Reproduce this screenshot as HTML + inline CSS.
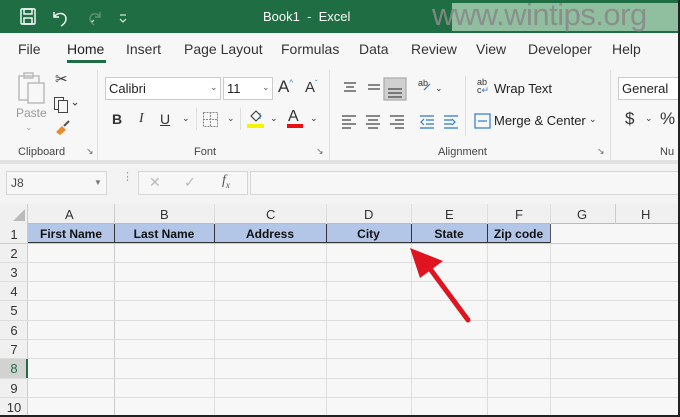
<!DOCTYPE html>
<html><head><style>
*{margin:0;padding:0;box-sizing:border-box}
body{width:680px;height:417px;overflow:hidden;background:#f3f3f3;font-family:"Liberation Sans",sans-serif;position:relative;color:#333}
.a{position:absolute}
.t{font-size:12px;color:#222}
.grid div{position:absolute}
</style></head><body>
<div class="a" style="left:0;top:0;width:680px;height:33px;background:#1f6e43"></div>
<div class="a" style="left:452px;top:3px;width:228px;height:28px;background:#8fbf9f"></div>
<svg class="a" style="left:18px;top:6px" width="120" height="22" viewBox="0 0 120 22" fill="none" stroke="#fff" stroke-width="1.4">
<rect x="3" y="3" width="14" height="15" rx="1"/><rect x="6" y="3" width="8" height="5"/><rect x="6" y="12" width="8" height="6"/>
<path d="M36 6v5h5M36 11c3-5 12-5 12 2c0 3-3 6-5 7"/><path d="M72 14l2 2 2-2" stroke-width="1"/>
<path d="M102 9h6M102 13l3 3 3-3" stroke-width="1"/>
</svg>
<svg class="a" style="left:88px;top:8px" width="30" height="18" fill="none" stroke="#5d9475" stroke-width="1.4"><path d="M12 4v5h-5M12 9c-3-5-10-4-10 2c0 3 3 5 4 6"/></svg>
<div class="a" style="left:263px;top:9px;font-size:13px;color:#fff">Book1 &nbsp;- &nbsp;Excel</div>
<div class="a" style="left:432px;top:-3px;font-size:31px;color:#8a8a8a;opacity:.9;white-space:nowrap;letter-spacing:-0.5px">www.wintips.org</div>
<div class="a" style="left:0;top:33px;width:680px;height:130px;background:#f7f7f7"></div>
<div class="a" style="top:41px;left:0;font-size:14px;color:#333;white-space:nowrap">
<span class="a" style="left:18px">File</span><span class="a" style="left:67px;color:#222">Home</span><span class="a" style="left:126px">Insert</span><span class="a" style="left:184px">Page Layout</span><span class="a" style="left:281px">Formulas</span><span class="a" style="left:359px">Data</span><span class="a" style="left:411px">Review</span><span class="a" style="left:476px">View</span><span class="a" style="left:528px">Developer</span><span class="a" style="left:612px">Help</span></div>
<div class="a" style="left:67px;top:60px;width:39px;height:3px;background:#1f6e43"></div>
<svg class="a" style="left:16px;top:70px" width="60" height="72" fill="none" stroke="#bbb" stroke-width="1.5">
<rect x="3" y="6" width="20" height="24"/><rect x="12" y="13" width="16" height="20" fill="#f7f7f7"/><rect x="8" y="3" width="9" height="5"/>
</svg>
<div class="a t" style="left:16px;top:106px;color:#999">Paste</div>
<div class="a" style="left:25px;top:122px;font-size:9px;color:#aaa">⌄</div>
<div class="a" style="left:55px;top:70px;font-size:15px;color:#333">✂</div>
<svg class="a" style="left:53px;top:95px" width="30" height="20" fill="none" stroke="#444"><rect x="1.5" y="2.5" width="9" height="12"/><rect x="5.5" y="5.5" width="9" height="12" fill="#f7f7f7"/><path d="M20 8l2 2 2-2"/></svg>
<svg class="a" style="left:53px;top:118px" width="20" height="18"><path d="M3 14l6-6 4 4-6 5z" fill="#e98a2c"/><path d="M11 8l5-5" stroke="#555" stroke-width="2"/></svg>
<div class="a t" style="left:18px;top:146px;font-size:11px;color:#444">Clipboard</div>
<div class="a" style="left:86px;top:146px;font-size:9px;color:#666">↘</div>
<div class="a" style="left:97px;top:70px;width:1px;height:90px;background:#ddd"></div>
<div class="a" style="left:105px;top:77px;width:116px;height:23px;border:1px solid #ccc;background:#fff"></div>
<div class="a t" style="left:109px;top:81px;font-size:13px">Calibri</div>
<div class="a" style="left:210px;top:82px;font-size:9px;color:#555">⌄</div>
<div class="a" style="left:223px;top:77px;width:50px;height:23px;border:1px solid #ccc;background:#fff"></div>
<div class="a t" style="left:227px;top:81px;font-size:13px">11</div>
<div class="a" style="left:262px;top:82px;font-size:9px;color:#555">⌄</div>
<div class="a" style="left:278px;top:77px;font-size:17px;color:#333">A<sup style="font-size:8px;color:#2a7ad0">^</sup></div>
<div class="a" style="left:305px;top:79px;font-size:15px;color:#333">A<sup style="font-size:8px;color:#2a7ad0">ˇ</sup></div>
<div class="a" style="left:112px;top:111px;font-size:14px;font-weight:bold">B</div>
<div class="a" style="left:139px;top:111px;font-size:14px;font-style:italic;font-family:'Liberation Serif'">I</div>
<div class="a" style="left:160px;top:111px;font-size:14px;text-decoration:underline">U</div>
<div class="a" style="left:182px;top:113px;font-size:9px">⌄</div>
<div class="a" style="left:196px;top:108px;width:1px;height:22px;background:#ddd"></div>
<svg class="a" style="left:202px;top:111px" width="18" height="18" fill="none" stroke="#888" stroke-dasharray="2 1"><rect x="1.5" y="1.5" width="14" height="14"/><path d="M8.5 1v15M1 8.5h15"/></svg>
<div class="a" style="left:227px;top:113px;font-size:9px">⌄</div>
<div class="a" style="left:240px;top:108px;width:1px;height:22px;background:#ddd"></div>
<svg class="a" style="left:247px;top:108px" width="18" height="16" fill="none" stroke="#333"><path d="M4 8l5-5 5 5-5 5z"/><path d="M13 5v6" stroke="#2a7ad0"/></svg>
<div class="a" style="left:247px;top:124px;width:17px;height:4px;background:#f5f500"></div>
<div class="a" style="left:270px;top:113px;font-size:9px">⌄</div>
<div class="a" style="left:288px;top:108px;font-size:16px;color:#333">A</div>
<div class="a" style="left:287px;top:124px;width:16px;height:4px;background:#e81010"></div>
<div class="a" style="left:310px;top:113px;font-size:9px">⌄</div>
<div class="a t" style="left:194px;top:146px;font-size:11px;color:#444">Font</div>
<div class="a" style="left:316px;top:146px;font-size:9px;color:#666">↘</div>
<div class="a" style="left:329px;top:70px;width:1px;height:90px;background:#ddd"></div>
<svg class="a" style="left:338px;top:76px" width="270" height="60" fill="none" stroke="#444" stroke-width="1.2">
<rect x="46" y="2" width="22" height="22" fill="#d0d0d0" stroke="#aaa"/>
<path d="M6 7h12M8 11h8M6 15h12"/><path d="M30 9h12M30 13h12"/><path d="M50 13h14M50 17h14M50 21h14"/>
<path d="M4 40h14M4 44h9M4 48h14M4 52h9"/><path d="M28 40h14M30 44h10M28 48h14M30 52h10"/><path d="M52 40h14M57 44h9M52 48h14M57 52h9"/>
<path d="M82 40h14M82 52h14M88 44h8M88 48h8M86 43l-3 3 3 3" stroke="#2a7ad0"/>
<path d="M106 40h14M106 52h14M106 44h8M106 48h8M114 43l3 3-3 3" stroke="#2a7ad0"/>
<rect x="137" y="38" width="15" height="14" stroke="#2a7ad0"/><path d="M140 45h9" stroke="#2a7ad0"/>
<path d="M86 14l6-6" stroke="#2a7ad0"/>
</svg>
<div class="a" style="left:418px;top:78px;font-size:9px;color:#333">ab</div>
<div class="a" style="left:435px;top:83px;font-size:9px">⌄</div>
<div class="a" style="left:465px;top:76px;width:1px;height:60px;background:#ddd"></div>
<div class="a" style="left:477px;top:78px;font-size:9px;color:#333;line-height:8px">ab<br>c<span style="color:#2a7ad0">↵</span></div>
<div class="a t" style="left:494px;top:81px;font-size:13px">Wrap Text</div>
<div class="a t" style="left:494px;top:113px;font-size:13px">Merge &amp; Center</div>
<div class="a" style="left:589px;top:114px;font-size:9px">⌄</div>
<div class="a t" style="left:438px;top:146px;font-size:11px;color:#444">Alignment</div>
<div class="a" style="left:597px;top:146px;font-size:9px;color:#666">↘</div>
<div class="a" style="left:610px;top:70px;width:1px;height:90px;background:#ddd"></div>
<div class="a" style="left:618px;top:77px;width:70px;height:23px;border:1px solid #ccc;background:#fff"></div>
<div class="a t" style="left:622px;top:81px;font-size:13px">General</div>
<div class="a" style="left:625px;top:109px;font-size:17px;color:#333">$</div>
<div class="a" style="left:645px;top:113px;font-size:9px">⌄</div>
<div class="a" style="left:660px;top:109px;font-size:17px;color:#333">%</div>
<div class="a t" style="left:660px;top:146px;font-size:11px;color:#444">Nu</div>
<div class="a" style="left:0;top:160px;width:680px;height:4px;background:#e2e2e2"></div>
<div class="a" style="left:0;top:164px;width:680px;height:40px;background:#f3f3f3"></div>
<div class="a" style="left:6px;top:171px;width:101px;height:24px;border:1px solid #d5d5d5;background:#f7f7f7"></div>
<div class="a t" style="left:11px;top:176px;color:#444">J8</div>
<div class="a" style="left:94px;top:178px;font-size:8px;color:#777">▼</div>
<div class="a" style="left:122px;top:175px;font-size:11px;color:#999;line-height:5px">⋮</div>
<div class="a" style="left:138px;top:171px;width:110px;height:24px;border:1px solid #d5d5d5;background:#f7f7f7"></div>
<div class="a" style="left:149px;top:174px;font-size:14px;color:#bbb">✕</div>
<div class="a" style="left:184px;top:174px;font-size:14px;color:#bbb">✓</div>
<div class="a" style="left:222px;top:173px;font-size:14px;font-style:italic;font-family:'Liberation Serif';color:#555">f<sub style="font-size:9px">x</sub></div>
<div class="a" style="left:250px;top:171px;width:430px;height:24px;border:1px solid #d5d5d5;background:#f7f7f7"></div>
<div class="a" style="left:0;top:204px;width:680px;height:213px;background:#f7f7f7"></div>
<div class="a" style="left:0;top:204px;width:28px;height:212px;background:#f0f0f0;border-right:1px solid #ccc"></div>
<div class="a" style="left:28px;top:204px;width:652px;height:20px;background:#f0f0f0;border-bottom:1px solid #bbb"></div>
<svg class="a" style="left:12px;top:208px" width="14" height="14"><path d="M13 1v12H1z" fill="#bbb"/></svg>
<div class="grid" style="font-size:13px;color:#333">
<div style="left:114px;top:204px;width:1px;height:212px;background:#ccc"></div>
<div style="left:214px;top:204px;width:1px;height:212px;background:#ddd"></div>
<div style="left:326px;top:204px;width:1px;height:212px;background:#ddd"></div>
<div style="left:411px;top:204px;width:1px;height:212px;background:#ddd"></div>
<div style="left:487px;top:204px;width:1px;height:212px;background:#ddd"></div>
<div style="left:550px;top:204px;width:1px;height:212px;background:#ddd"></div>
<div style="left:615px;top:204px;width:1px;height:20px;background:#ccc"></div>
<div style="left:28px;top:224px;width:523px;height:19px;background:#b4c6e7;border-bottom:1px solid #333"></div>
<div style="left:114px;top:224px;width:1px;height:19px;background:#333"></div>
<div style="left:214px;top:224px;width:1px;height:19px;background:#333"></div>
<div style="left:326px;top:224px;width:1px;height:19px;background:#333"></div>
<div style="left:411px;top:224px;width:1px;height:19px;background:#333"></div>
<div style="left:487px;top:224px;width:1px;height:19px;background:#333"></div>
<div style="left:550px;top:224px;width:1px;height:19px;background:#555"></div>
<div style="left:0;top:243px;width:680px;height:1px;background:#ccc"></div>
<div style="left:0;top:262px;width:680px;height:1px;background:#ddd"></div>
<div style="left:0;top:281px;width:680px;height:1px;background:#ddd"></div>
<div style="left:0;top:300px;width:680px;height:1px;background:#ddd"></div>
<div style="left:0;top:320px;width:680px;height:1px;background:#ddd"></div>
<div style="left:0;top:339px;width:680px;height:1px;background:#ddd"></div>
<div style="left:0;top:358px;width:680px;height:1px;background:#ddd"></div>
<div style="left:0;top:378px;width:680px;height:1px;background:#ddd"></div>
<div style="left:0;top:397px;width:680px;height:1px;background:#ddd"></div>
<div style="left:0;top:359px;width:28px;height:19px;background:#d2d2d2;border-right:2px solid #1f6e43"></div>
<div style="left:65px;top:207px">A</div><div style="left:160px;top:207px">B</div><div style="left:266px;top:207px">C</div><div style="left:364px;top:207px">D</div><div style="left:445px;top:207px">E</div><div style="left:515px;top:207px">F</div><div style="left:577px;top:207px">G</div><div style="left:641px;top:207px">H</div>
<div style="font-weight:bold;font-size:12px;color:#111;top:227px;left:28px;width:86px;text-align:center">First Name</div>
<div style="font-weight:bold;font-size:12px;color:#111;top:227px;left:114px;width:100px;text-align:center">Last Name</div>
<div style="font-weight:bold;font-size:12px;color:#111;top:227px;left:214px;width:112px;text-align:center">Address</div>
<div style="font-weight:bold;font-size:12px;color:#111;top:227px;left:326px;width:85px;text-align:center">City</div>
<div style="font-weight:bold;font-size:12px;color:#111;top:227px;left:411px;width:76px;text-align:center">State</div>
<div style="font-weight:bold;font-size:12px;color:#111;top:227px;left:487px;width:63px;text-align:center">Zip code</div>
<div style="left:0;width:28px;text-align:center;top:227px">1</div>
<div style="left:0;width:28px;text-align:center;top:246px">2</div>
<div style="left:0;width:28px;text-align:center;top:265px">3</div>
<div style="left:0;width:28px;text-align:center;top:284px">4</div>
<div style="left:0;width:28px;text-align:center;top:303px">5</div>
<div style="left:0;width:28px;text-align:center;top:323px">6</div>
<div style="left:0;width:28px;text-align:center;top:342px">7</div>
<div style="left:0;width:28px;text-align:center;top:361px;color:#1f6e43">8</div>
<div style="left:0;width:28px;text-align:center;top:381px">9</div>
<div style="left:0;width:28px;text-align:center;top:400px">10</div>
</div>
<div class="a" style="left:678px;top:0;width:2px;height:417px;background:#222"></div>
<div class="a" style="left:0;top:415px;width:680px;height:2px;background:#222"></div>
<svg class="a" style="left:400px;top:240px" width="80" height="90"><path d="M68 80L28 26" stroke="#e0141e" stroke-width="5" stroke-linecap="round"/><path d="M10 8l33 13-23 17z" fill="#e0141e"/></svg>
</body></html>
